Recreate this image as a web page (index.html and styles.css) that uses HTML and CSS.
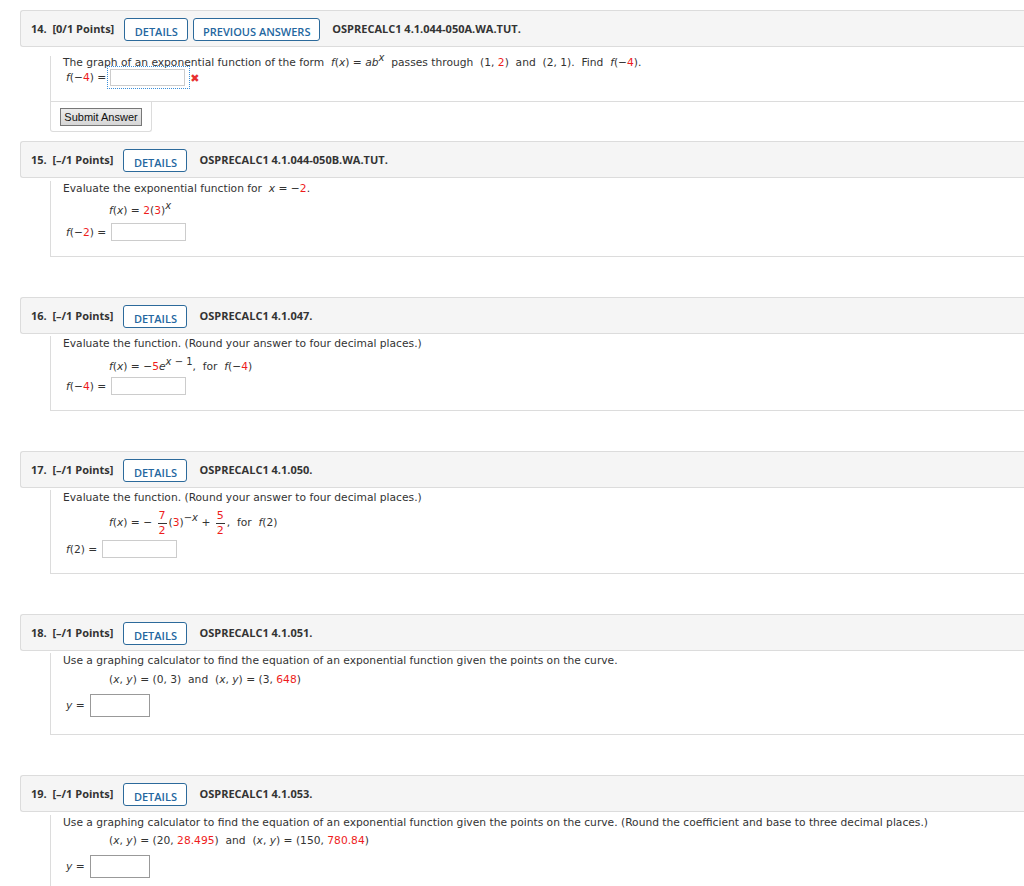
FILE: index.html
```html
<!DOCTYPE html>
<html>
<head>
<meta charset="utf-8">
<link rel="stylesheet" href="styles.css">
</head>
<body>
<div class="page">

  <div class="question q14">
    <div class="qhead">
      <span class="qnum">14.&nbsp; [0/1 Points]</span>
      <span class="btn">DETAILS</span>
      <span class="btn btn-prev">PREVIOUS ANSWERS</span>
      <span class="qcode">OSPRECALC1 4.1.044-050A.WA.TUT.</span>
    </div>
    <div class="qbody">
      <div class="intro">The graph of an exponential function of the form&nbsp; <i>f</i>(<i>x</i>) = <i>ab</i><sup><i>x</i></sup>&nbsp; passes through&nbsp; (1, <span class="r">2</span>)&nbsp; and&nbsp; (2, 1).&nbsp; Find&nbsp; <i>f</i>(−<span class="r">4</span>).</div>
      <div class="answer">
        <span class="lbl"><i>f</i>(−<span class="r">4</span>) =</span>
        <span class="focus"><span class="inp"></span></span>
        <span class="wrong">✖</span>
      </div>
    </div>
    <div class="submit-box"><span class="submit">Submit Answer</span></div>
  </div>

  <div class="question q15">
    <div class="qhead">
      <span class="qnum">15.&nbsp; [–/1 Points]</span>
      <span class="btn">DETAILS</span>
      <span class="qcode">OSPRECALC1 4.1.044-050B.WA.TUT.</span>
    </div>
    <div class="qbody">
      <div class="intro">Evaluate the exponential function for&nbsp; <i>x</i> = −<span class="r">2</span>.</div>
      <div class="formula"><i>f</i>(<i>x</i>) = <span class="r">2</span>(<span class="r">3</span>)<sup><i>x</i></sup></div>
      <div class="answer">
        <span class="lbl"><i>f</i>(−<span class="r">2</span>) =</span>
        <span class="inp"></span>
      </div>
    </div>
  </div>

  <div class="question q16">
    <div class="qhead">
      <span class="qnum">16.&nbsp; [–/1 Points]</span>
      <span class="btn">DETAILS</span>
      <span class="qcode">OSPRECALC1 4.1.047.</span>
    </div>
    <div class="qbody">
      <div class="intro">Evaluate the function. (Round your answer to four decimal places.)</div>
      <div class="formula"><i>f</i>(<i>x</i>) = −<span class="r">5</span><i>e</i><sup><i>x</i> − 1</sup>,&nbsp; for&nbsp; <i>f</i>(−<span class="r">4</span>)</div>
      <div class="answer">
        <span class="lbl"><i>f</i>(−<span class="r">4</span>) =</span>
        <span class="inp"></span>
      </div>
    </div>
  </div>

  <div class="question q17">
    <div class="qhead">
      <span class="qnum">17.&nbsp; [–/1 Points]</span>
      <span class="btn">DETAILS</span>
      <span class="qcode">OSPRECALC1 4.1.050.</span>
    </div>
    <div class="qbody">
      <div class="intro">Evaluate the function. (Round your answer to four decimal places.)</div>
      <div class="formula frac-row"><span><i>f</i>(<i>x</i>) = −&nbsp;</span><span class="frac"><span class="r">7</span><span class="r den">2</span></span><span>(<span class="r">3</span>)<sup>−<i>x</i></sup> +&nbsp;</span><span class="frac"><span class="r">5</span><span class="r den">2</span></span><span>,&nbsp; for&nbsp; <i>f</i>(2)</span></div>
      <div class="answer">
        <span class="lbl"><i>f</i>(2) =</span>
        <span class="inp"></span>
      </div>
    </div>
  </div>

  <div class="question q18">
    <div class="qhead">
      <span class="qnum">18.&nbsp; [–/1 Points]</span>
      <span class="btn">DETAILS</span>
      <span class="qcode">OSPRECALC1 4.1.051.</span>
    </div>
    <div class="qbody">
      <div class="intro">Use a graphing calculator to find the equation of an exponential function given the points on the curve.</div>
      <div class="formula">(<i>x</i>, <i>y</i>) = (0, 3)&nbsp; and&nbsp; (<i>x</i>, <i>y</i>) = (3, <span class="r">648</span>)</div>
      <div class="answer">
        <span class="lbl"><i>y</i> =</span>
        <span class="inp big"></span>
      </div>
    </div>
  </div>

  <div class="question q19">
    <div class="qhead">
      <span class="qnum">19.&nbsp; [–/1 Points]</span>
      <span class="btn">DETAILS</span>
      <span class="qcode">OSPRECALC1 4.1.053.</span>
    </div>
    <div class="qbody">
      <div class="intro">Use a graphing calculator to find the equation of an exponential function given the points on the curve. (Round the coefficient and base to three decimal places.)</div>
      <div class="formula">(<i>x</i>, <i>y</i>) = (20, <span class="r">28.495</span>)&nbsp; and&nbsp; (<i>x</i>, <i>y</i>) = (150, <span class="r">780.84</span>)</div>
      <div class="answer">
        <span class="lbl"><i>y</i> =</span>
        <span class="inp big"></span>
      </div>
    </div>
  </div>

</div>
</body>
</html>
```

FILE: styles.css
```css
html, body {
  margin: 0;
  padding: 0;
  background: #fff;
  overflow: hidden;
}

.page {
  width: 1100px;
  padding: 10px 0 0 20px;
  font-family: "DejaVu Sans", Verdana, sans-serif;
  font-size: 10.7px;
  color: #333;
}

.question {
  margin-bottom: 40px;
}

.q14 {
  margin-bottom: 9px;
}

.qhead {
  box-sizing: border-box;
  height: 37px;
  display: flex;
  align-items: center;
  background: #f5f5f5;
  border: 1px solid #dcdcdc;
  border-right: none;
  border-radius: 3px 0 0 3px;
  padding-left: 10px;
  font-family: "Open Sans", "Liberation Sans", sans-serif;
}

.qnum {
  font-weight: bold;
  font-size: 11px;
  color: #333;
  margin-right: 10px;
}

.btn {
  box-sizing: border-box;
  height: 23px;
  padding: 6px 0 0;
  border: 1px solid #2c6a9b;
  border-radius: 3px;
  background: #fff;
  color: #2467a0;
  font-size: 11px;
  font-weight: 600;
  line-height: 14px;
  margin-top: 1px;
  margin-right: 5px;
  width: 64px;
  text-align: center;
}

.btn-prev {
  width: 127px;
}

.qcode {
  font-weight: bold;
  font-size: 11px;
  color: #333;
  margin-left: 7px;
}

.qbody {
  margin-left: 30px;
  border-left: 1px solid #dcdcdc;
  border-bottom: 1px solid #dcdcdc;
  padding: 0 12px;
}

.intro, .formula {
  line-height: 16px;
  white-space: nowrap;
}

.formula {
  padding-left: 46px;
}

sup {
  font-size: 10px;
  line-height: 0;
  vertical-align: 5px;
}

i {
  font-style: italic;
}

.r {
  color: #ee1c1c;
}

.answer {
  display: flex;
  align-items: center;
  height: 20px;
}

.lbl {
  padding-left: 3px;
  margin-right: 5px;
}

.inp {
  box-sizing: border-box;
  display: inline-block;
  width: 75px;
  height: 18px;
  border: 1px solid #ccc;
  background: #fff;
}

.inp.big {
  width: 60px;
  height: 23px;
  border-color: #999;
}

/* Q14 */
.q14 .qbody {
  padding-bottom: 17px;
}

.q14 .intro {
  margin-top: 9px;
  line-height: 14px;
}

.q14 .answer {
  height: 14px;
}

.q14 .lbl {
  margin-right: 2px;
}

.focus {
  display: inline-flex;
  padding: 2px 4px 2px 2px;
  outline: 1px dotted #3b8fd9;
  margin-top: 1px;
}

.focus .inp {
  height: 17px;
}

.wrong {
  color: #e8302f;
  font-size: 11px;
  margin-left: 1px;
  margin-top: 2px;
}

.submit-box {
  box-sizing: border-box;
  margin-left: 30px;
  width: 102px;
  height: 30px;
  border: 1px solid #dcdcdc;
  border-top: none;
  border-radius: 0 0 3px 3px;
  padding: 6px 0 0 9px;
}

.submit {
  display: inline-block;
  box-sizing: border-box;
  height: 18px;
  width: 82px;
  border: 1px solid #777;
  background: linear-gradient(#ececec, #d6d6d6);
  font-family: "Liberation Sans", Arial, sans-serif;
  font-size: 11px;
  line-height: 16px;
  text-align: center;
  color: #111;
}

/* Q15 */
.q15 .intro { margin-top: 3px; }
.q15 .formula { margin-top: 6px; }
.q15 .answer { margin-top: 3px; }
.q15 .qbody { padding-bottom: 14px; }

/* Q16 */
.q16 .intro { margin-top: 2px; }
.q16 .formula { margin-top: 7px; }
.q16 .answer { margin-top: 1px; }
.q16 .qbody { padding-bottom: 14px; }

/* Q17 */
.q17 .intro { margin-top: 2px; }
.frac-row {
  display: flex;
  align-items: center;
  height: 30px;
  margin-top: 2px;
}
.frac {
  display: inline-flex;
  flex-direction: column;
  align-items: center;
  font-size: 11px;
  line-height: 14px;
  padding: 0 2px;
}
.frac .den {
  border-top: 1px solid #333;
  line-height: 13px;
  padding: 0 1px;
}
.q17 .answer { margin-top: 1px; }
.q17 .lbl { margin-right: 5px; }
.q17 .qbody { padding-bottom: 14px; }

/* Q18 / Q19 */
.q18 .intro { margin-top: 2px; }
.q18 .formula { margin-top: 3px; }
.q18 .answer { margin-top: 5px; height: 24px; }
.q18 .qbody { padding-bottom: 17px; }

.q19 .intro { margin-top: 3px; }
.q19 .formula { margin-top: 2px; }
.q19 .answer { margin-top: 5px; height: 24px; }
.q19 .qbody { padding-bottom: 19px; }
```
